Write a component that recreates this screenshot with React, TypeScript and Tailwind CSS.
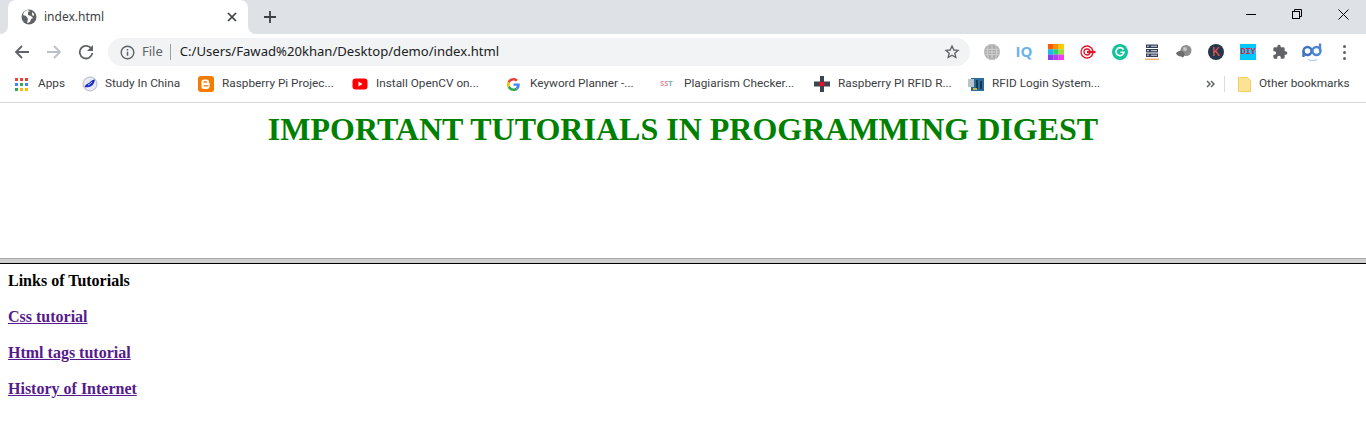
const uiFont = { fontFamily: '"Noto Sans", "Open Sans", sans-serif' };

const Favicon = ({ kind }: { kind: string }) => {
  if (kind === "apps") {
    const colors = ["#ea4335", "#ea4335", "#ea4335", "#4285f4", "#34a853", "#4285f4", "#34a853", "#fbbc05", "#fbbc05"];
    return (
      <div className="grid grid-cols-3 gap-[2px] w-[13px] h-[13px] shrink-0">
        {colors.map((c, i) => (
          <span key={i} style={{ backgroundColor: c }} />
        ))}
      </div>
    );
  }
  if (kind === "study") {
    return (
      <svg width="16" height="16" viewBox="0 0 16 16" className="shrink-0">
        <circle cx="8" cy="8" r="7" fill="#e8eaf2" stroke="#b5b8c8" strokeWidth="1" />
        <path d="M2.500 11 C4 7.500 6 8 8 6 C9.500 4.500 11 3.500 13 3.500 C12.500 7 10.500 10.500 7 11 C5 11.300 3.500 11.300 2.500 11 Z" fill="#1c30c4" />
        <path d="M6 9 C7.500 8.500 8.500 7.500 10 6" stroke="#e8eaf2" strokeWidth="0.800" fill="none" />
      </svg>
    );
  }
  if (kind === "blogger") {
    return (
      <svg width="16" height="16" viewBox="0 0 16 16" className="shrink-0">
        <rect width="16" height="16" rx="3" fill="#f57c00" />
        <path d="M5.500 3.500h3a2.500 2.500 0 0 1 2.500 2.500v.8h.6v3.700a2.400 2.400 0 0 1-2.400 2.400H6a2.500 2.500 0 0 1-2.500-2.500V5.500a2 2 0 0 1 2-2Z" fill="#fff" />
        <path d="M6 6h2.500M6 9.800h4" stroke="#f57c00" strokeWidth="1.300" strokeLinecap="round" />
      </svg>
    );
  }
  if (kind === "youtube") {
    return (
      <svg width="16" height="16" viewBox="0 0 16 16" className="shrink-0">
        <rect x="0.500" y="2.500" width="15" height="11" rx="3" fill="#f00" />
        <path d="M6.500 5.500v5l4-2.500Z" fill="#fff" />
      </svg>
    );
  }
  if (kind === "google") {
    return (
      <svg width="13" height="13" viewBox="0 0 48 48" className="shrink-0">
        <path fill="#ea4335" d="M24 9.500c3.500 0 6.700 1.200 9.200 3.600l6.900-6.900C35.900 2.400 30.500 0 24 0 14.600 0 6.500 5.400 2.600 13.200l8 6.200C12.500 13.600 17.800 9.500 24 9.500Z" />
        <path fill="#4285f4" d="M47 24.500c0-1.600-.1-3.100-.4-4.500H24v9h13c-.6 3-2.200 5.500-4.800 7.200l7.700 6C44.400 37.900 47 31.800 47 24.500Z" />
        <path fill="#fbbc05" d="M10.500 28.600A14.500 14.500 0 0 1 10.500 19.400l-8-6.200A24 24 0 0 0 2.600 34.800Z" />
        <path fill="#34a853" d="M24 48c6.500 0 11.900-2.100 15.900-5.800l-7.700-6c-2.200 1.500-5 2.300-8.200 2.300-6.200 0-11.500-4.200-13.400-9.800l-8 6.200C6.500 42.600 14.600 48 24 48Z" />
      </svg>
    );
  }
  if (kind === "sst") {
    return (
      <span className="w-[16px] shrink-0 text-[7.5px] font-bold leading-none" style={uiFont}>
        <span className="text-[#e88a9c]">SS</span>
        <span className="text-[#6fb6b0]">T</span>
      </span>
    );
  }
  if (kind === "raspberry") {
    return (
      <svg width="16" height="16" viewBox="0 0 16 16" className="shrink-0">
        <path d="M6 0h4v5.500H16v5h-6V16H6v-5.500H0v-5h6Z" fill="#37474f" />
        <rect x="5.500" y="6" width="5" height="4" fill="#e8112d" />
      </svg>
    );
  }
  return (
    <svg width="16" height="16" viewBox="0 0 16 16" className="shrink-0">
      <rect x="3" y="2" width="13" height="13" fill="#2b6a9b" />
      <rect x="0" y="3" width="6" height="8" fill="#b8c4cc" />
      <rect x="8" y="4" width="2" height="9" fill="#16384f" />
      <rect x="12" y="5" width="2" height="8" fill="#16384f" />
      <rect x="5" y="12" width="4" height="2" fill="#c7b24a" />
    </svg>
  );
};

const Bookmark = ({ kind, label, width, iconBox = "w-[23px]" }: { kind: string; label: string; width: string; iconBox?: string }) => (
  <div className={`flex items-center shrink-0 ${width}`}>
    <div className={`shrink-0 flex items-center ${iconBox}`}>
      <Favicon kind={kind} />
    </div>
    <span className="text-[11.8px] text-[#3c4043] whitespace-nowrap" style={{ fontFamily: 'Roboto, "Noto Sans", sans-serif' }}>
      {label}
    </span>
  </div>
);

const ExtIcon = ({ children }: { children: React.ReactNode }) => (
  <div className="w-[32px] shrink-0 flex items-center justify-center">{children}</div>
);

const Extensions = () => (
  <div className="flex items-center ml-[6px]">
    <ExtIcon>
      <svg width="16" height="16" viewBox="0 0 16 16">
        <circle cx="8" cy="8" r="8" fill="#aeaeae" />
        <path d="M0 5.300h16M0 8h16M0 10.700h16M8 0v16M4.500 1C3 5 3 11 4.500 15M11.500 1c1.500 4 1.500 10 0 14" stroke="#d6d6d6" strokeWidth="0.800" fill="none" />
      </svg>
    </ExtIcon>
    <ExtIcon>
      <span className="text-[15px] font-bold text-[#6cb2ea] leading-none -mt-[2px]" style={{ fontFamily: '"Open Sans", sans-serif' }}>
        IQ
      </span>
    </ExtIcon>
    <ExtIcon>
      <svg width="16" height="16" viewBox="0 0 16 16">
        <rect width="5.400" height="5.400" fill="#ff5a00" />
        <rect x="5.300" width="5.400" height="5.400" fill="#ff8f00" />
        <rect x="10.600" width="5.400" height="5.400" fill="#ffcc00" />
        <rect y="5.300" width="5.400" height="5.400" fill="#14b8f5" />
        <rect x="5.300" y="5.300" width="5.400" height="5.400" fill="#2fd16a" />
        <rect x="10.600" y="5.300" width="5.400" height="5.400" fill="#9be040" />
        <rect y="10.600" width="5.400" height="5.400" fill="#8b3df5" />
        <rect x="5.300" y="10.600" width="5.400" height="5.400" fill="#b040f5" />
        <rect x="10.600" y="10.600" width="5.400" height="5.400" fill="#f03df0" />
      </svg>
    </ExtIcon>
    <ExtIcon>
      <svg width="16" height="16" viewBox="0 0 16 16" fill="none">
        <circle cx="7" cy="8" r="6" stroke="#e2162a" strokeWidth="1.300" />
        <circle cx="7" cy="8" r="3" stroke="#e2162a" strokeWidth="1.300" />
        <path d="M7 6.800h8.500v2.400H7Z" fill="#e2162a" />
      </svg>
    </ExtIcon>
    <ExtIcon>
      <svg width="16" height="16" viewBox="0 0 16 16" fill="none">
        <circle cx="8" cy="8" r="8" fill="#15c39a" />
        <path d="M11.200 5.200A4 4 0 1 0 12 8.200H9" stroke="#fff" strokeWidth="1.600" strokeLinecap="round" />
      </svg>
    </ExtIcon>
    <ExtIcon>
      <svg width="14" height="16" viewBox="0 0 14 16">
        <rect x="1" y="0.500" width="12" height="3.500" fill="#34405a" />
        <rect x="1" y="5" width="12" height="3.500" fill="#34405a" />
        <rect x="1" y="9.500" width="12" height="3.500" fill="#34405a" />
        <rect x="0" y="14.500" width="14" height="1.500" fill="#f7b27a" />
        <rect x="2" y="1.700" width="2" height="1" fill="#d7dce6" />
        <rect x="6" y="1.700" width="6" height="1" fill="#d7dce6" />
        <rect x="2" y="6.200" width="2" height="1" fill="#d7dce6" />
        <rect x="6" y="6.200" width="6" height="1" fill="#d7dce6" />
        <rect x="2" y="10.700" width="2" height="1" fill="#d7dce6" />
        <rect x="6" y="10.700" width="6" height="1" fill="#d7dce6" />
      </svg>
    </ExtIcon>
    <ExtIcon>
      <svg width="16" height="16" viewBox="0 0 16 16">
        <circle cx="10" cy="6.500" r="5.500" fill="#8f8f8f" />
        <circle cx="9" cy="5" r="2" fill="#c9c9c9" />
        <path d="M0 9.500 C1.500 6.500 5 6 7 7.500 C9 9 9 11.500 7 13.500 L5 12.500 C3 12.500 1 11.500 0 9.500Z" fill="#6d6d6d" />
      </svg>
    </ExtIcon>
    <ExtIcon>
      <div className="w-[16px] h-[16px] rounded-full bg-[#26364a] flex items-center justify-center">
        <span className="text-[13px] leading-none text-[#e2584f]" style={{ fontFamily: '"Liberation Mono", monospace' }}>
          K
        </span>
      </div>
    </ExtIcon>
    <ExtIcon>
      <div className="w-[16px] h-[16px] bg-[#00c8ff] flex items-center justify-center">
        <span className="text-[9px] font-bold leading-none text-[#e8213f] tracking-[-0.4px]" style={{ fontFamily: '"Liberation Mono", monospace' }}>
          DIY
        </span>
      </div>
    </ExtIcon>
    <ExtIcon>
      <svg width="16" height="16" viewBox="0 0 24 24" fill="#5f6368">
        <path d="M20.500 11H19V7a2 2 0 0 0-2-2h-4V3.500a2.500 2.500 0 0 0-5 0V5H4a2 2 0 0 0-2 2v3.800h1.500a2.700 2.700 0 0 1 0 5.400H2V20a2 2 0 0 0 2 2h3.800v-1.500a2.700 2.700 0 0 1 5.400 0V22H17a2 2 0 0 0 2-2v-4h1.500a2.500 2.500 0 0 0 0-5Z" />
      </svg>
    </ExtIcon>
    <ExtIcon>
      <svg width="21" height="20" viewBox="0 0 21 20" fill="none">
        <circle cx="5.500" cy="9" r="4" stroke="#3f72bf" strokeWidth="2.400" />
        <circle cx="14.500" cy="9" r="4" stroke="#4d86d3" strokeWidth="2.400" />
        <path d="M18 9V1.500" stroke="#4d86d3" strokeWidth="2.400" />
        <path d="M1.500 9v6" stroke="#3f72bf" strokeWidth="2.400" />
        <path d="M6 17.500c3 1.500 6 1.500 9 0" stroke="#b9cce8" strokeWidth="1.200" />
      </svg>
    </ExtIcon>
    <div className="w-[32px] shrink-0 flex flex-col items-center gap-[3px]">
      <span className="w-[3px] h-[3px] rounded-full bg-[#5f6368]" />
      <span className="w-[3px] h-[3px] rounded-full bg-[#5f6368]" />
      <span className="w-[3px] h-[3px] rounded-full bg-[#5f6368]" />
    </div>
  </div>
);

const TabStrip = () => (
  <div className="flex h-[34px] bg-[#dee1e6] pl-[8px]">
    <div className="relative w-[240px] h-full bg-white rounded-t-[8px] flex items-center pl-[13px] pr-[10px]">
      <span className="absolute bottom-0 -left-[8px] w-[8px] h-[8px] bg-white" />
      <span className="absolute bottom-0 -left-[8px] w-[8px] h-[8px] bg-[#dee1e6] rounded-br-[8px]" />
      <span className="absolute bottom-0 -right-[8px] w-[8px] h-[8px] bg-white" />
      <span className="absolute bottom-0 -right-[8px] w-[8px] h-[8px] bg-[#dee1e6] rounded-bl-[8px]" />
      <svg width="16" height="16" viewBox="0 0 16 16" className="shrink-0">
        <circle cx="8" cy="8" r="7.500" fill="#5f6368" />
        <path d="M2 6l3 1 2 3-1 4 3-1 1-3 2-1-2-2-3-1V3l2-1-3-1-3 2Z" fill="#fff" />
        <path d="M11 3l2 2v2l-2-1Z" fill="#fff" />
      </svg>
      <span className="ml-[7px] text-[12px] text-[#3c4043] flex-1">index.html</span>
      <svg width="10" height="10" viewBox="0 0 10 10" className="mr-[1px]">
        <path d="M1 1l8 8M9 1l-8 8" stroke="#3c4043" strokeWidth="1.700" />
      </svg>
    </div>
    <div className="ml-[15px] flex items-center">
      <svg width="14" height="14" viewBox="0 0 14 14">
        <path d="M7 1v12M1 7h12" stroke="#3c4043" strokeWidth="1.800" />
      </svg>
    </div>
    <div className="ml-auto flex items-center h-[28px]">
      <div className="w-[46px] flex justify-center">
        <span className="w-[10px] h-px bg-black" />
      </div>
      <div className="w-[46px] flex justify-center">
        <svg width="10" height="10" viewBox="0 0 10 10" fill="none" stroke="#000" strokeWidth="1">
          <rect x="0.500" y="2.500" width="7" height="7" />
          <path d="M2.500 2.500v-2h7v7h-2" />
        </svg>
      </div>
      <div className="w-[46px] flex justify-center">
        <svg width="11" height="11" viewBox="0 0 11 11" stroke="#000" strokeWidth="1">
          <path d="M0.500 0.500l10 10M10.500 0.500l-10 10" />
        </svg>
      </div>
    </div>
  </div>
);

const Toolbar = () => (
  <div className="flex items-center h-[35px] bg-white pl-[14px] pt-[1px]">
    <svg width="16" height="16" viewBox="0 0 16 16" fill="none" stroke="#5f6368" strokeWidth="1.800">
      <path d="M15 8H2M8 2L2 8l6 6" />
    </svg>
    <svg width="16" height="16" viewBox="0 0 16 16" fill="none" stroke="#bcbfc3" strokeWidth="1.800" className="ml-[16px]">
      <path d="M1 8h13M8 2l6 6-6 6" />
    </svg>
    <svg width="16" height="16" viewBox="0 0 16 16" fill="none" className="ml-[16px]">
      <path d="M13.500 5A6.300 6.300 0 1 0 14.300 9" stroke="#5f6368" strokeWidth="1.800" />
      <path d="M15 1v6H9Z" fill="#5f6368" />
    </svg>
    <div className="ml-[14px] w-[862px] h-[28px] rounded-full bg-[#f1f3f4] flex items-center pl-[12px] pr-[10px]">
      <svg width="15" height="15" viewBox="0 0 15 15" fill="none" className="shrink-0">
        <circle cx="7.500" cy="7.500" r="6.300" stroke="#5f6368" strokeWidth="1.400" />
        <path d="M7.500 6.700v4M7.500 4v1.500" stroke="#5f6368" strokeWidth="1.500" />
      </svg>
      <span className="ml-[7px] text-[13px] text-[#5f6368]">File</span>
      <span className="ml-[7px] w-px h-[16px] bg-[#9aa0a6]" />
      <span className="ml-[9px] text-[13.1px] text-[#202124] whitespace-nowrap">C:/Users/Fawad%20khan/Desktop/demo/index.html</span>
      <svg width="16" height="16" viewBox="0 0 24 24" fill="none" stroke="#5f6368" strokeWidth="2" className="ml-auto">
        <path d="M12 3l2.700 6 6.300.6-4.800 4.200 1.500 6.400L12 16.800l-5.700 3.400 1.500-6.400L3 9.600 9.300 9Z" />
      </svg>
    </div>
    <Extensions />
  </div>
);

const Bookmarks = () => (
  <div className="flex items-center h-[34px] bg-white border-b border-[#d7d8da] pl-[15px] pb-[3px]">
    <Bookmark kind="apps" label="Apps" width="w-[67px]" />
    <Bookmark kind="study" label="Study In China" width="w-[116px]" />
    <Bookmark kind="blogger" label="Raspberry Pi Projec..." width="w-[154px]" iconBox="w-[24px]" />
    <Bookmark kind="youtube" label="Install OpenCV on..." width="w-[155px]" iconBox="w-[24px]" />
    <Bookmark kind="google" label="Keyword Planner -..." width="w-[153px]" />
    <Bookmark kind="sst" label="Plagiarism Checker..." width="w-[154px]" iconBox="w-[24px]" />
    <Bookmark kind="raspberry" label="Raspberry PI RFID R..." width="w-[154px]" iconBox="w-[24px]" />
    <Bookmark kind="rfid" label="RFID Login System..." width="w-[242px]" iconBox="w-[24px]" />
    <svg width="9" height="8" viewBox="0 0 9 8" fill="none" stroke="#5f6368" strokeWidth="1.500" className="shrink-0 -ml-[4px]">
      <path d="M1 1l3 3-3 3M5 1l3 3-3 3" />
    </svg>
    <span className="w-px h-[16px] bg-[#dadce0] ml-[9px] shrink-0" />
    <svg width="13" height="15" viewBox="0 0 13 15" className="ml-[13px] shrink-0">
      <path d="M0.500 0.500h9l3 3v11H0.500Z" fill="#fde293" stroke="#f2cf63" />
    </svg>
    <span className="ml-[8px] text-[11.8px] text-[#3c4043] whitespace-nowrap" style={{ fontFamily: 'Roboto, "Noto Sans", sans-serif' }}>
      Other bookmarks
    </span>
  </div>
);

const App = () => {
  return (
    <div className="h-[447px] overflow-hidden bg-white flex flex-col" style={uiFont}>
      <TabStrip />
      <Toolbar />
      <Bookmarks />
      <div className="h-[155px] shrink-0 pt-[8px] text-center" style={{ fontFamily: '"Liberation Serif", serif' }}>
        <h1 className="text-[32px] leading-[37px] font-bold text-[#008000]">IMPORTANT TUTORIALS IN PROGRAMMING DIGEST</h1>
      </div>
      <div className="h-[6px] shrink-0 bg-[#cfcfcf] border-t border-[#a8a8a8] border-b border-b-black" />
      <div className="px-[8px] pt-[8px] text-[16px] leading-[18px] font-bold flex flex-col gap-[18px]" style={{ fontFamily: '"Liberation Serif", serif' }}>
        <p className="text-black">Links of Tutorials</p>
        <a href="#" className="underline text-[#551a8b] w-fit">Css tutorial</a>
        <a href="#" className="underline text-[#551a8b] w-fit">Html tags tutorial</a>
        <a href="#" className="underline text-[#551a8b] w-fit">History of Internet</a>
      </div>
    </div>
  );
};

export default App;
